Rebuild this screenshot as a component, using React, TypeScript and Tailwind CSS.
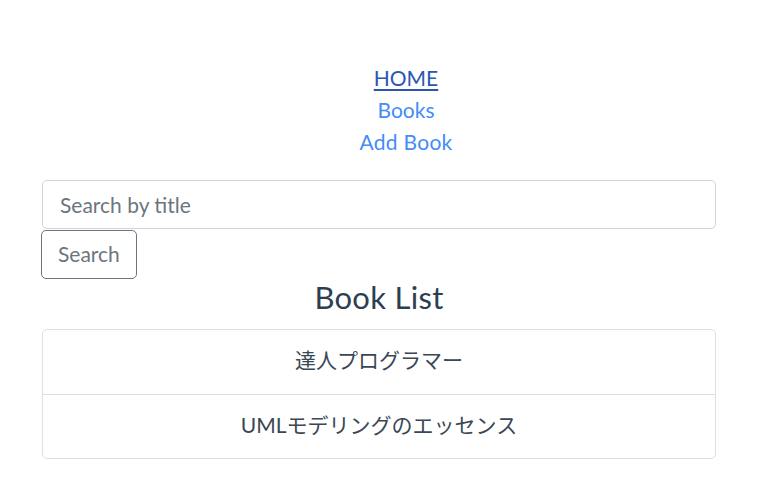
import React from 'react';

const books = ['達人プログラマー', 'UMLモデリングのエッセンス'];

export default function App() {
  return (
    <div
      className="min-h-screen bg-white text-[#2c3e50]"
      style={{ fontFamily: 'Lato, "Noto Sans CJK JP", sans-serif' }}
    >
      <nav className="flex flex-col items-center pt-[62px] pl-[44px] text-[21px] leading-[32px]">
        <a href="#" className="text-[#2b57b0] underline underline-offset-[3px]">HOME</a>
        <a href="#" className="text-[#448cf6]">Books</a>
        <a href="#" className="text-[#448cf6] tracking-[0.3px]">Add Book</a>
      </nav>

      <div className="ml-[42px] mt-[22px] w-[674px]">
        <input
          type="text"
          placeholder="Search by title"
          className="block h-[49px] w-full rounded-[5px] border border-[#ced4da] px-[17px] text-[21px] text-[#495057] placeholder:text-[#6c757d] outline-none"
        />
        <button className="-ml-px mt-px h-[49px] rounded-[5px] border border-[#6c757d] px-[16px] pb-[2px] text-[21px] text-[#6c757d]">
          Search
        </button>

        <h4 className="mt-0 mb-[14px] text-center text-[31px] leading-[36px] tracking-[0.3px]">Book List</h4>

        <ul className="rounded-[5px] border border-[#dfdfdf]">
          {books.map((title, i) => (
            <li
              key={i}
              className={`h-[64px] pb-[4px] flex items-center justify-center text-[21px] text-[#3a4754] ${i > 0 ? 'border-t border-[#dfdfdf]' : ''}`}
            >
              {title}
            </li>
          ))}
        </ul>
      </div>
    </div>
  );
}
